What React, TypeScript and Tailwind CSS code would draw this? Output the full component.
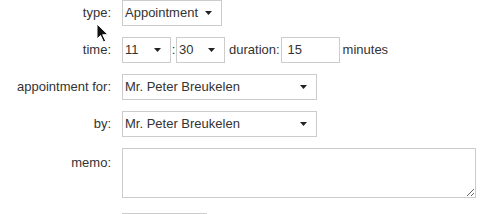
import React from 'react';

function Caret() {
  return (
    <svg width="7" height="4" viewBox="0 0 7 4" className="shrink-0">
      <path d="M0 0h7L3.5 4z" fill="#222" />
    </svg>
  );
}

function Select({ value, w }: { value: string; w: string }) {
  return (
    <div className={`${w} h-[26px] flex items-center justify-between border border-[#cccccc] bg-white pl-[2px] pr-[9px] text-[#333]`}>
      <span className="whitespace-nowrap">{value}</span>
      <Caret />
    </div>
  );
}

function Label({ children, top }: { children: React.ReactNode; top?: boolean }) {
  return (
    <div className={`text-right text-[#333] whitespace-nowrap ${top ? 'pt-[5px]' : 'h-[26px] leading-[26px]'}`}>
      {children}
    </div>
  );
}

export default function App() {
  return (
    <div
      className="relative h-[214px] w-[501px] overflow-hidden bg-white text-[13px]"
      style={{ fontFamily: '"Liberation Sans", Arial, sans-serif' }}
    >
      <div className="grid grid-cols-[111px_1fr] gap-x-[11px] gap-y-[11px]">
        <Label>type:</Label>
        <Select value="Appointment" w="w-[100px]" />

        <Label>time:</Label>
        <div className="flex items-center text-[#333]">
          <Select value="11" w="w-[49px]" />
          <span className="w-[5px] text-center">:</span>
          <Select value="30" w="w-[49px]" />
          <span className="ml-[4px] mr-[1px]">duration:</span>
          <div className="w-[59px] h-[26px] border border-[#cccccc] pl-[6px] leading-[24px]">15</div>
          <span className="ml-[3px]">minutes</span>
        </div>

        <Label>appointment for:</Label>
        <Select value="Mr. Peter Breukelen" w="w-[195px]" />

        <Label>by:</Label>
        <Select value="Mr. Peter Breukelen" w="w-[195px]" />

        <Label top>memo:</Label>
        <textarea className="block w-[354px] h-[50px] border border-[#cccccc] resize-y outline-none" />

        <div />
        <div className="mt-[4px] w-[85px] h-[30px] border border-[#cccccc]" />
      </div>

      <svg className="absolute left-[96px] top-[23px]" width="13" height="21" viewBox="0 0 13 21">
        <path
          d="M1 1v15l3.5-3.5 3 6.5 2.2-1-3-6.3H12z"
          fill="#111"
          stroke="#fff"
          strokeWidth="1"
          strokeLinejoin="round"
        />
      </svg>
    </div>
  );
}
